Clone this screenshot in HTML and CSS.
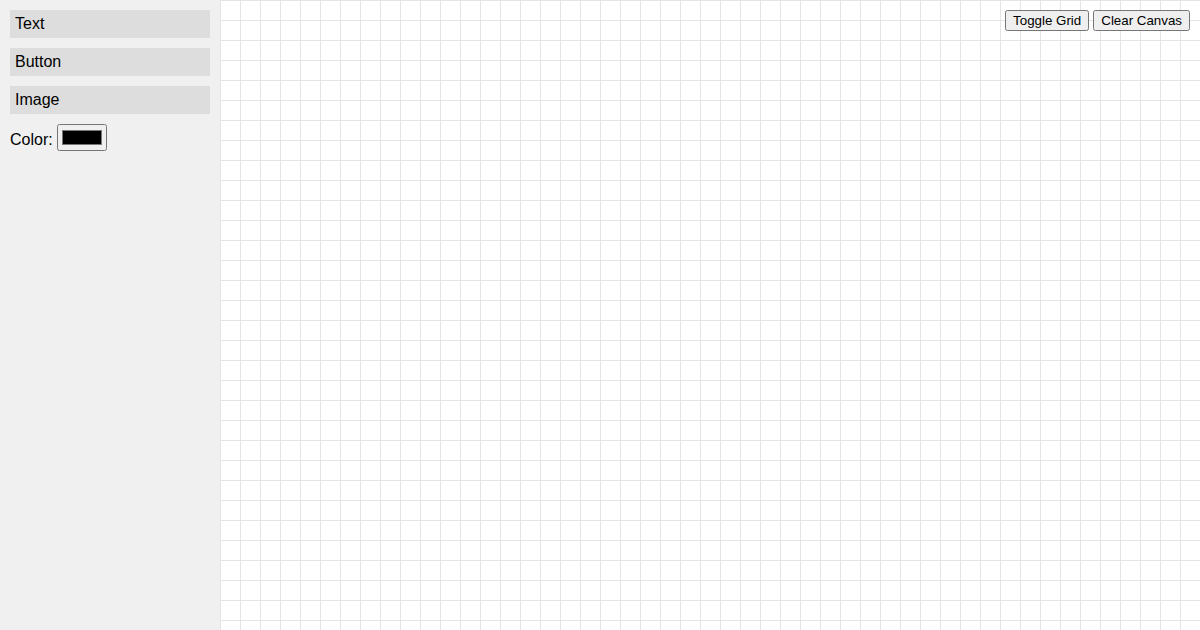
FILE: index.html
```html
<!DOCTYPE html>
<html>
<head>
<meta charset="utf-8">
<link rel="stylesheet" href="styles.css">
</head>
<body>
<div class="app">
  <aside class="sidebar">
    <div class="item">Text</div>
    <div class="item">Button</div>
    <div class="item">Image</div>
    <div class="color-row">
      <label>Color:</label>
      <input type="color" value="#000000">
    </div>
  </aside>
  <main class="canvas">
    <div class="toolbar">
      <button>Toggle Grid</button>
      <button>Clear Canvas</button>
    </div>
  </main>
</div>
</body>
</html>
```
FILE: styles.css
```css
html, body {
  margin: 0;
  padding: 0;
  height: 100%;
  font-family: "Liberation Sans", Arial, sans-serif;
}
.app {
  display: flex;
  height: 630px;
}
.sidebar {
  width: 200px;
  padding: 10px;
  background: #f0f0f0;
  display: flex;
  flex-direction: column;
  gap: 10px;
  flex-shrink: 0;
}
.item {
  background: #dddddd;
  padding: 5px;
  font-size: 16px;
  line-height: 18px;
  color: #000;
}
.color-row {
  display: flex;
  align-items: center;
  gap: 4px;
  font-size: 16px;
}
.color-row label {
  padding-top: 4px;
}
.color-row input {
  width: 50px;
  height: 27px;
  margin: 0;
}
.canvas {
  flex: 1;
  position: relative;
  background-color: #fff;
  background-image:
    linear-gradient(to right, #e4e4e4 1px, transparent 1px),
    linear-gradient(to bottom, #e4e4e4 1px, transparent 1px);
  background-size: 20px 20px;
}
.toolbar {
  position: absolute;
  top: 10px;
  right: 10px;
  display: flex;
  gap: 4px;
}
.toolbar button {
  font-family: "Liberation Sans", Arial, sans-serif;
  font-size: 13.33px;
  margin: 0;
}
```
